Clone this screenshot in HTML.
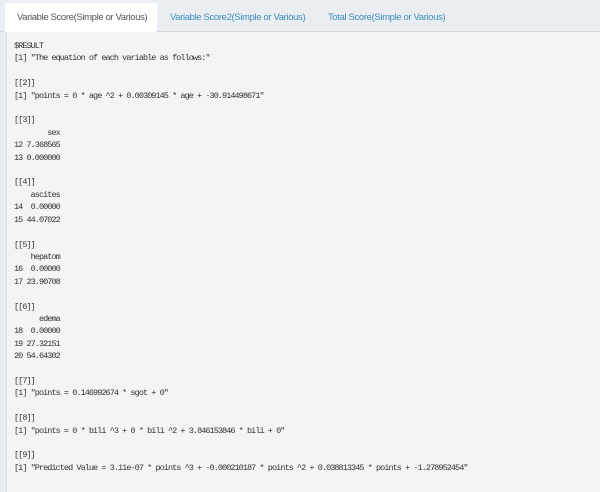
<!DOCTYPE html>
<html><head><meta charset="utf-8"><style>
html,body{margin:0;padding:0;}
body{width:600px;height:485px;background:#eaeef3;position:relative;overflow:hidden;font-family:"Liberation Sans",sans-serif;}
.tab{position:absolute;top:3px;height:28px;line-height:30px;font-size:9.5px;letter-spacing:-0.36px;color:#3c8dbc;white-space:nowrap;}
.t1{left:5px;width:152px;background:#fff;color:#555;border-radius:2px 2px 0 0;height:29px;}
.line{position:absolute;left:0;top:31px;width:600px;height:1px;background:#d0d6dd;}
pre{position:absolute;left:6px;top:32px;width:594px;height:460px;margin:0;background:#f4f4f4;border-left:1px solid #e0e0e0;box-sizing:border-box;
font-family:"Liberation Mono",monospace;font-size:8.5px;letter-spacing:-0.94px;line-height:12.41px;color:#333;padding:8px 0 0 7px;}
</style></head><body>
<div class="line"></div>
<div class="tab t1"><span style="position:absolute;left:12px">Variable Score(Simple or Various)</span></div>
<div class="tab" style="left:170px">Variable Score2(Simple or Various)</div>
<div class="tab" style="left:328px">Total Score(Simple or Various)</div>
<pre>$RESULT
[1] "The equation of each variable as follows:"

[[2]]
[1] "points = 0 * age ^2 + 0.00309145 * age + -30.914498671"

[[3]]
        sex
12 7.368565
13 0.000000

[[4]]
    ascites
14  0.00000
15 44.07022

[[5]]
    hepatom
16  0.00000
17 23.90708

[[6]]
      edema
18  0.00000
19 27.32151
20 54.64302

[[7]]
[1] "points = 0.146992674 * sgot + 0"

[[8]]
[1] "points = 0 * bili ^3 + 0 * bili ^2 + 3.846153846 * bili + 0"

[[9]]
[1] "Predicted Value = 3.11e-07 * points ^3 + -0.000210187 * points ^2 + 0.038813345 * points + -1.278952454"
</pre>
</body></html>
